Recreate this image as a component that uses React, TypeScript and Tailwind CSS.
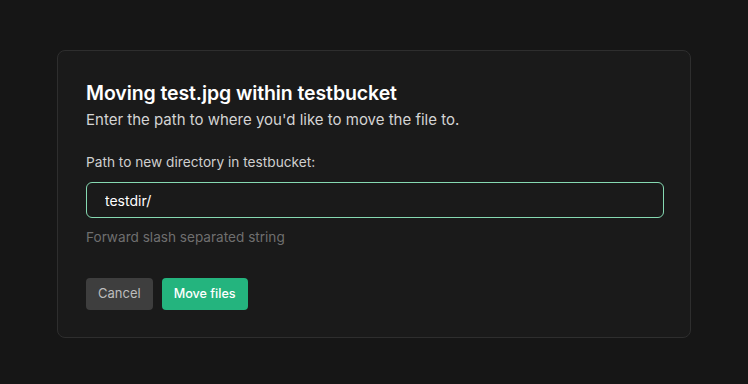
export default function App() {
  return (
    <div className="w-[748px] h-[384px] bg-[#161616] flex items-start justify-center pt-[50px] font-['Inter',sans-serif]">
      <div className="w-[634px] h-[288px] bg-[#1a1a1a] border border-[#2e2e2e] rounded-lg px-[28px] pt-[30px]">
        <h2 className="text-[19.5px] leading-6 font-semibold text-white tracking-[-0.1px]">
          Moving test.jpg within testbucket
        </h2>
        <p className="text-[15px] leading-5 text-[#d4d4d4] mt-[5px]">
          Enter the path to where you'd like to move the file to.
        </p>
        <label className="block text-[13.7px] leading-5 text-[#cfcfcf] mt-[22px]">
          Path to new directory in testbucket:
        </label>
        <input
          defaultValue="testdir/"
          spellCheck
          className="mt-[10px] w-[578px] h-[36px] rounded-md border border-[#86d9b2] bg-[#1a1a1a] px-[18px] text-[14px] text-white outline-none"
        />
        <p className="text-[13.6px] leading-5 text-[#6f6f6f] mt-[9px]">Forward slash separated string</p>
        <div className="flex gap-[9px] mt-[31px]">
          <button className="h-[32px] px-[12px] rounded bg-[#3e3e3e] text-[13px] text-[#bdbdbd]">Cancel</button>
          <button className="h-[32px] px-[12px] rounded bg-[#24b47e] text-[12.6px] font-medium text-white">Move files</button>
        </div>
      </div>
    </div>
  );
}
